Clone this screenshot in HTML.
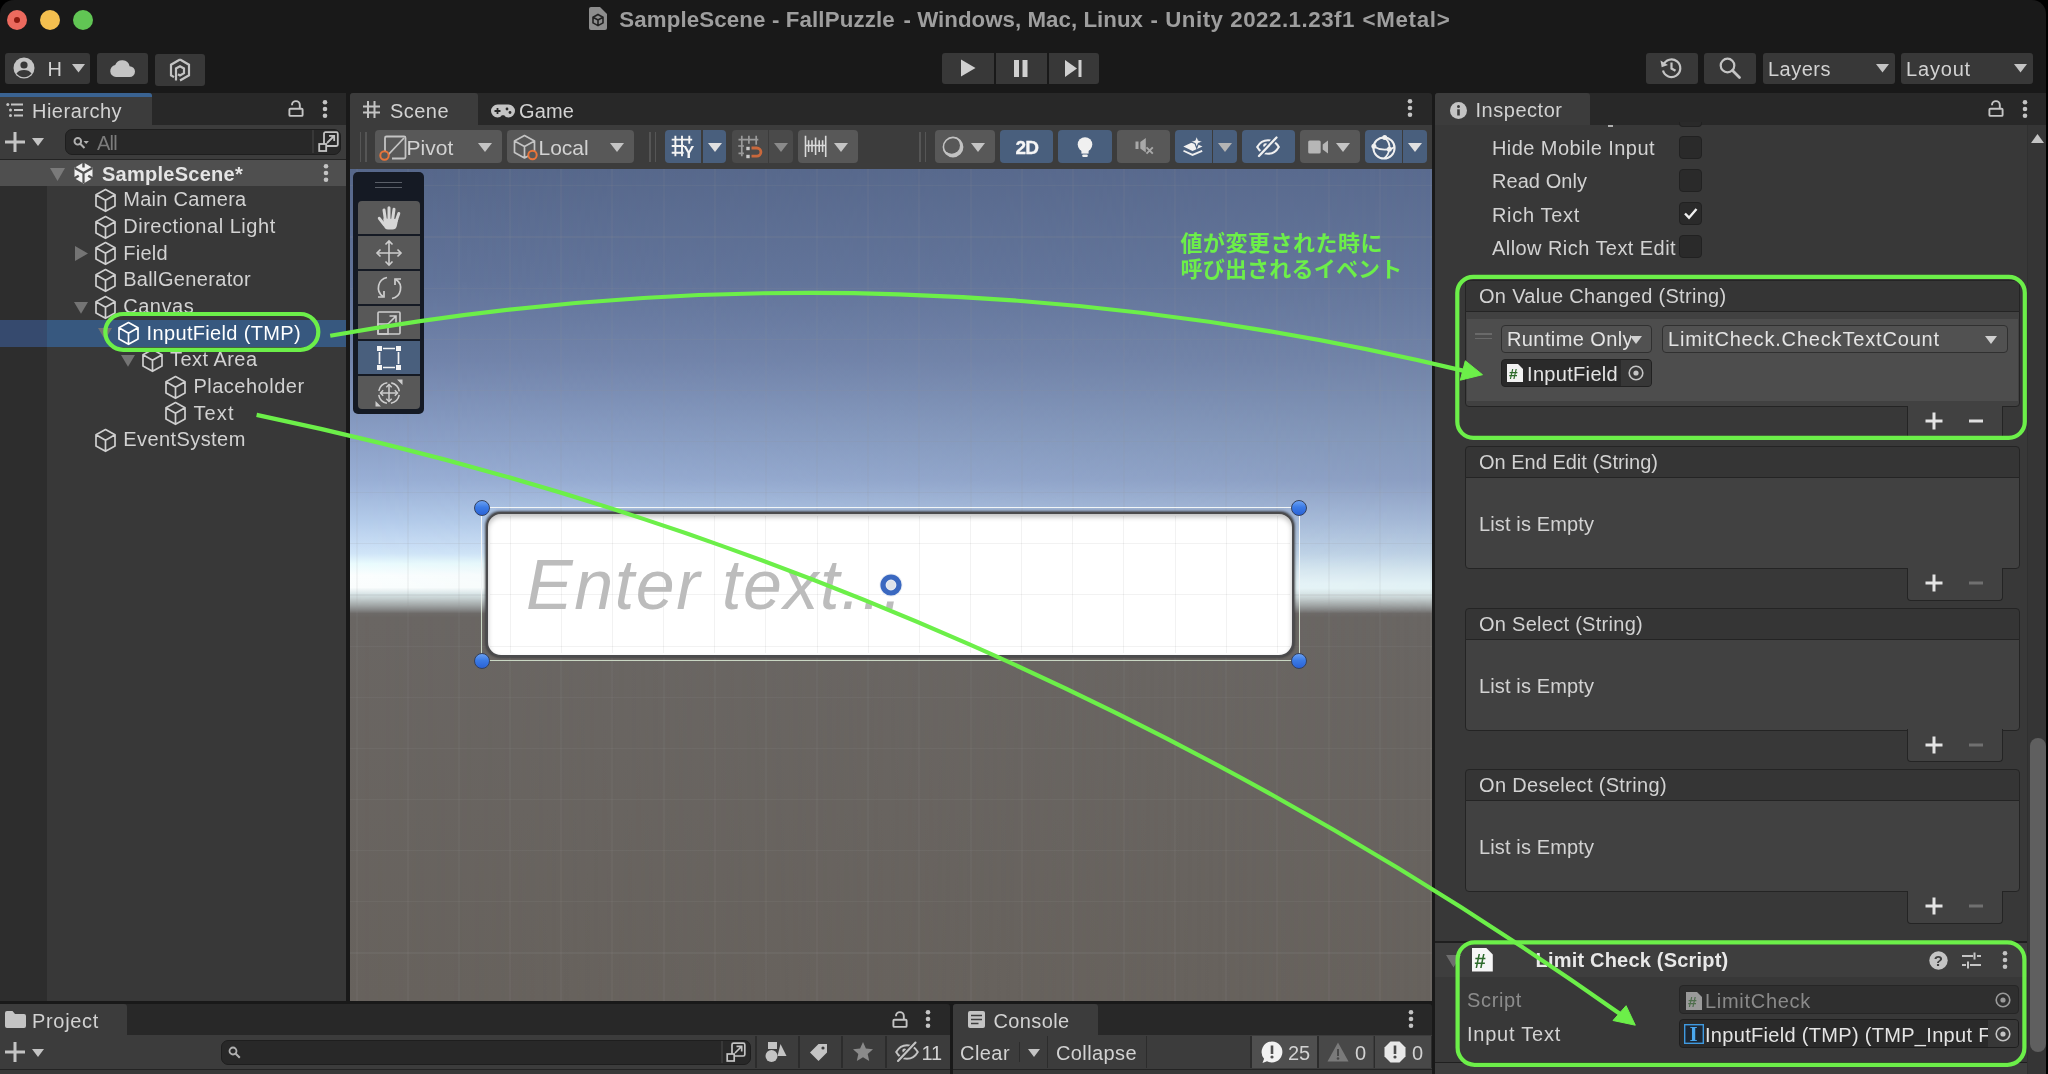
<!DOCTYPE html>
<html lang="ja"><head><meta charset="utf-8"><title>SampleScene - FallPuzzle - Unity</title>
<style>
html,body{margin:0;padding:0;background:#000;}
body{width:2048px;height:1074px;position:relative;overflow:hidden;font-family:"Liberation Sans",sans-serif;}
#root{position:absolute;left:0;top:0;width:2048px;height:1074px;will-change:transform;}
.a{position:absolute;box-sizing:border-box;}
.t{position:absolute;white-space:nowrap;}
svg{overflow:visible;}
</style></head><body><div id="root">
<div class="a " style="left:0px;top:0px;width:2046px;height:1074px;background:#191919;border-radius:14px 14px 0 0;"></div>
<div class="a " style="left:7px;top:10px;width:20px;height:20px;background:#ec6a5e;border-radius:50%;"></div>
<div class="a " style="left:40px;top:10px;width:20px;height:20px;background:#f4bf4f;border-radius:50%;"></div>
<div class="a " style="left:73px;top:10px;width:20px;height:20px;background:#61c554;border-radius:50%;"></div>
<div class="a " style="left:14px;top:17px;width:6px;height:6px;background:#8c1a10;border-radius:50%;"></div>
<svg class="a" style="left:588px;top:6px;" width="20" height="25" viewBox="0 0 20 25"><path d="M1 3a2 2 0 0 1 2-2h9l7 7v14a2 2 0 0 1-2 2H3a2 2 0 0 1-2-2z" fill="#8e8e8e"/><path d="M10 8.5l5 2.8v5.6l-5 2.8-5-2.8v-5.6z M10 14v5.5 M10 14l5-2.7 M10 14L5 11.3" fill="none" stroke="#222" stroke-width="1.6"/></svg>
<span class="t" style="left:619.3px;top:4.5px;font-size:22.3px;color:#9e9e9e;line-height:30px;font-weight:bold;letter-spacing:0.12px;">SampleScene - FallPuzzle</span>
<span class="t" style="left:903.5px;top:4.5px;font-size:22.3px;color:#9e9e9e;line-height:30px;font-weight:bold;letter-spacing:0.03px;">- Windows, Mac, Linux</span>
<span class="t" style="left:1150.5px;top:4.5px;font-size:22.3px;color:#9e9e9e;line-height:30px;font-weight:bold;letter-spacing:0.52px;">- Unity 2022.1.23f1</span>
<span class="t" style="left:1362.5px;top:4.5px;font-size:22.3px;color:#9e9e9e;line-height:30px;font-weight:bold;letter-spacing:0.71px;">&lt;Metal&gt;</span>
<div class="a " style="left:5px;top:52.7px;width:85px;height:31.3px;background:#383838;border-radius:3px;"></div>
<div class="a " style="left:97px;top:52.7px;width:51px;height:31.3px;background:#383838;border-radius:3px;"></div>
<div class="a " style="left:155px;top:53.8px;width:50px;height:32.2px;background:#383838;border-radius:3px;"></div>
<svg class="a" style="left:13px;top:57px;" width="22" height="22" viewBox="0 0 22 22"><circle cx="11" cy="11" r="10.5" fill="#c4c4c4"/><circle cx="11" cy="8" r="3.6" fill="#383838"/><path d="M3.5 16.5c1.5-2.6 4.3-3.6 7.5-3.6s6 1 7.500 3.600c-1.800 2.400-4.500 3.700-7.500 3.700s-5.700-1.300-7.500-3.700z" fill="#383838"/></svg>
<span class="t" style="left:47.5px;top:54.0px;font-size:20px;color:#d2d2d2;line-height:30px;">H</span>
<svg class="a" style="left:72px;top:64px;" width="13" height="9" viewBox="0 0 13 9"><path d="M0 0h13L6.500 8.500z" fill="#c4c4c4"/></svg>
<svg class="a" style="left:110px;top:59px;" width="25" height="18" viewBox="0 0 25 18"><path d="M6 18a6 6 0 0 1-.8-11.900A7.500 7.500 0 0 1 19.600 7.200 5.400 5.400 0 0 1 19.600 18z" fill="#c4c4c4"/></svg>
<svg class="a" style="left:169px;top:58px;" width="22" height="24" viewBox="0 0 22 24"><path d="M11 1.500l9 5.200v10.600l-9 5.200" fill="none" stroke="#c4c4c4" stroke-width="2.200"/><path d="M11 1.500l-9 5.200v10.600l3 1.800" fill="none" stroke="#c4c4c4" stroke-width="2.200"/><path d="M7 22.500v-12l4-2.300 4 2.300v4.600l-4 2.300-2-1.200" fill="none" stroke="#c4c4c4" stroke-width="2.200"/></svg>
<div class="a " style="left:942px;top:52.7px;width:157px;height:31.3px;background:#383838;border-radius:3px;"></div>
<div class="a " style="left:994px;top:52px;width:2px;height:33px;background:#191919;"></div>
<div class="a " style="left:1047px;top:52px;width:2px;height:33px;background:#191919;"></div>
<svg class="a" style="left:960px;top:59px;" width="16" height="18" viewBox="0 0 16 18"><path d="M1 0.500l14.500 8.500L1 17.500z" fill="#d0d0d0"/></svg>
<svg class="a" style="left:1014px;top:60px;" width="14" height="17" viewBox="0 0 14 17"><rect x="0" y="0" width="5" height="17" fill="#d0d0d0"/><rect x="8.500" y="0" width="5" height="17" fill="#d0d0d0"/></svg>
<svg class="a" style="left:1065px;top:60px;" width="17" height="17" viewBox="0 0 17 17"><path d="M0 0l12 8.500L0 17z" fill="#d0d0d0"/><rect x="13.500" y="0" width="3" height="17" fill="#d0d0d0"/></svg>
<div class="a " style="left:1646px;top:52.7px;width:52px;height:31.3px;background:#383838;border-radius:3px;"></div>
<div class="a " style="left:1704px;top:52.7px;width:52px;height:31.3px;background:#383838;border-radius:3px;"></div>
<div class="a " style="left:1763px;top:52.7px;width:132px;height:31.3px;background:#383838;border-radius:3px;"></div>
<div class="a " style="left:1901px;top:52.7px;width:132px;height:31.3px;background:#383838;border-radius:3px;"></div>
<svg class="a" style="left:1660px;top:57px;" width="22" height="22" viewBox="0 0 22 22"><path d="M3.300 8a8.800 8.800 0 1 1-.3 5.500" fill="none" stroke="#c4c4c4" stroke-width="2.200"/><path d="M0.500 3.500l1.200 6.700 6.300-2.200z" fill="#c4c4c4"/><path d="M11.500 5.500v6l4 2.300" fill="none" stroke="#c4c4c4" stroke-width="2.200"/></svg>
<svg class="a" style="left:1719px;top:57px;" width="22" height="22" viewBox="0 0 22 22"><circle cx="8.500" cy="8.500" r="6.800" fill="none" stroke="#c4c4c4" stroke-width="2.200"/><path d="M13.500 13.500l7 7" stroke="#c4c4c4" stroke-width="2.800" stroke-linecap="round"/></svg>
<span class="t" style="left:1768px;top:54.0px;font-size:20px;color:#d2d2d2;line-height:30px;letter-spacing:0.49px;">Layers</span>
<span class="t" style="left:1906px;top:54.0px;font-size:20px;color:#d2d2d2;line-height:30px;letter-spacing:0.82px;">Layout</span>
<svg class="a" style="left:1876px;top:64px;" width="13" height="9" viewBox="0 0 13 9"><path d="M0 0h13L6.500 8.500z" fill="#c4c4c4"/></svg>
<svg class="a" style="left:2014px;top:64px;" width="13" height="9" viewBox="0 0 13 9"><path d="M0 0h13L6.500 8.500z" fill="#c4c4c4"/></svg>
<div class="a " style="left:0px;top:93px;width:346px;height:32px;background:#282828;"></div>
<div class="a " style="left:0px;top:93px;width:152px;height:32px;background:#3c3c3c;border-radius:0 3px 0 0;"></div>
<div class="a " style="left:0px;top:93px;width:152px;height:4px;background:#3a6392;border-radius:0 3px 0 0;"></div>
<svg class="a" style="left:6px;top:102px;" width="18" height="16" viewBox="0 0 18 16"><g fill="#c4c4c4"><circle cx="1.800" cy="2.500" r="1.500"/><circle cx="4.500" cy="8" r="1.500"/><circle cx="4.500" cy="13.500" r="1.500"/><rect x="5" y="1.500" width="12" height="2"/><rect x="8" y="7" width="9" height="2"/><rect x="8" y="12.500" width="9" height="2"/></g></svg>
<span class="t" style="left:32px;top:96.0px;font-size:20px;color:#d2d2d2;line-height:30px;letter-spacing:0.49px;">Hierarchy</span>
<svg class="a" style="left:288px;top:100.0px;" width="16" height="17" viewBox="0 0 16 17"><rect x="1.400" y="8.700" width="13.200" height="7.200" rx="1" fill="none" stroke="#c4c4c4" stroke-width="1.900"/><path d="M4 5.300V5a3.900 3.900 0 0 1 7.800 0V8.700" fill="none" stroke="#c4c4c4" stroke-width="1.900"/></svg>
<svg class="a" style="left:321.5px;top:97.8px;" width="6" height="22" viewBox="0 0 6 22"><circle cx="3" cy="4.2" r="2.3" fill="#c4c4c4"/><circle cx="3" cy="11.0" r="2.3" fill="#c4c4c4"/><circle cx="3" cy="17.8" r="2.3" fill="#c4c4c4"/></svg>
<div class="a " style="left:0px;top:125px;width:346px;height:34px;background:#3c3c3c;"></div>
<div class="a " style="left:0px;top:158.5px;width:346px;height:1.5px;background:#232323;"></div>
<svg class="a" style="left:5px;top:131.5px;" width="20" height="20" viewBox="0 0 20 20"><path d="M10 0v20M0 10h20" stroke="#c4c4c4" stroke-width="3"/></svg>
<svg class="a" style="left:32.0px;top:138.0px;" width="12" height="8" viewBox="0 0 12 8"><path d="M0 0h12L6.0 8z" fill="#c4c4c4"/></svg>
<div class="a " style="left:65px;top:128.5px;width:276px;height:26px;background:#282828;border:1.500px solid #1e1e1e;border-radius:7px;"></div>
<div class="a " style="left:312px;top:130px;width:1.5px;height:23px;background:#383838;"></div>
<svg class="a" style="left:73px;top:136px;" width="18" height="15" viewBox="0 0 18 15"><circle cx="4.800" cy="5.300" r="3.300" fill="none" stroke="#b0b0b0" stroke-width="1.900"/><path d="M7.200 7.700l4.300 4.300" stroke="#b0b0b0" stroke-width="2"/><path d="M10.500 5h5.400l-2.700 3z" fill="#b0b0b0"/></svg>
<span class="t" style="left:97px;top:128.0px;font-size:20px;color:#7c7c7c;line-height:30px;letter-spacing:-0.74px;">All</span>
<svg class="a" style="left:318px;top:131px;" width="21" height="21" viewBox="0 0 21 21"><rect x="6" y="1.200" width="13.800" height="13.800" rx="1.500" fill="none" stroke="#c4c4c4" stroke-width="1.800"/><rect x="1.200" y="13" width="7" height="7" fill="#282828" stroke="#c4c4c4" stroke-width="1.800"/><path d="M9 12l7-7M11 4.800h5.200V10" fill="none" stroke="#c4c4c4" stroke-width="1.800"/></svg>
<div class="a " style="left:0px;top:160px;width:346px;height:841px;background:#383838;"></div>
<div class="a " style="left:0px;top:185px;width:46.5px;height:816px;background:#2d2d2d;"></div>
<div class="a " style="left:0px;top:160px;width:346px;height:25.5px;background:#4f4f4f;"></div>
<svg class="a" style="left:50.0px;top:167.7px;" width="15" height="13" viewBox="0 0 15 13"><path d="M0 0h15L7.5 13z" fill="#7a7a7a"/></svg>
<svg class="a" style="left:73px;top:162px;" width="21" height="22" viewBox="0 0 21 22"><path d="M10.500 0.500l9 5.200v10.500l-9 5.300-9-5.300V5.700z" fill="#f0f0f0"/><path d="M10.500 11v10M10.500 11l8.800-5M10.500 11L1.700 6" stroke="#4f4f4f" stroke-width="2.200"/><path d="M10.500 0v5.500M1 16.500l4.800-2.800M20 16.500l-4.800-2.800" stroke="#4f4f4f" stroke-width="2.400"/></svg>
<span class="t" style="left:102px;top:158.5px;font-size:20px;color:#e4e4e4;line-height:30px;font-weight:bold;letter-spacing:0.26px;">SampleScene*</span>
<svg class="a" style="left:323px;top:162px;" width="6" height="22" viewBox="0 0 6 22"><circle cx="3" cy="4.2" r="2.3" fill="#c4c4c4"/><circle cx="3" cy="11.0" r="2.3" fill="#c4c4c4"/><circle cx="3" cy="17.8" r="2.3" fill="#c4c4c4"/></svg>
<svg class="a" style="left:93.7px;top:188.125px;" width="23" height="25" viewBox="0 0 23 25"><path d="M11.500 1.500l9.500 5.300v11.200l-9.500 5.300-9.500-5.300V6.800z M2 6.800l9.500 5.400 9.500-5.400 M11.500 12.200v11" fill="none" stroke="#cfcfcf" stroke-width="1.700" stroke-linejoin="round"/></svg>
<span class="t" style="left:123.2px;top:184.3px;font-size:20px;color:#d2d2d2;line-height:30px;letter-spacing:0.30px;">Main Camera</span>
<svg class="a" style="left:93.7px;top:214.775px;" width="23" height="25" viewBox="0 0 23 25"><path d="M11.500 1.500l9.500 5.300v11.200l-9.500 5.300-9.500-5.300V6.800z M2 6.800l9.500 5.400 9.500-5.400 M11.500 12.200v11" fill="none" stroke="#cfcfcf" stroke-width="1.700" stroke-linejoin="round"/></svg>
<span class="t" style="left:123.2px;top:211.0px;font-size:20px;color:#d2d2d2;line-height:30px;letter-spacing:0.54px;">Directional Light</span>
<svg class="a" style="left:74.5px;top:245.825px;" width="13" height="15" viewBox="0 0 13 15"><path d="M0 0v15L13 7.5z" fill="#747474"/></svg>
<svg class="a" style="left:93.7px;top:241.425px;" width="23" height="25" viewBox="0 0 23 25"><path d="M11.500 1.500l9.500 5.300v11.200l-9.500 5.300-9.500-5.300V6.800z M2 6.800l9.500 5.400 9.500-5.400 M11.500 12.200v11" fill="none" stroke="#cfcfcf" stroke-width="1.700" stroke-linejoin="round"/></svg>
<span class="t" style="left:123.2px;top:237.6px;font-size:20px;color:#d2d2d2;line-height:30px;letter-spacing:0.29px;">Field</span>
<svg class="a" style="left:93.7px;top:268.075px;" width="23" height="25" viewBox="0 0 23 25"><path d="M11.500 1.500l9.500 5.300v11.200l-9.500 5.300-9.500-5.300V6.800z M2 6.800l9.500 5.400 9.500-5.400 M11.500 12.200v11" fill="none" stroke="#cfcfcf" stroke-width="1.700" stroke-linejoin="round"/></svg>
<span class="t" style="left:123.2px;top:264.3px;font-size:20px;color:#d2d2d2;line-height:30px;letter-spacing:0.34px;">BallGenerator</span>
<svg class="a" style="left:74.2px;top:301.82500000000005px;" width="14" height="11.8" viewBox="0 0 14 11.8"><path d="M0 0h14L7.0 11.8z" fill="#747474"/></svg>
<svg class="a" style="left:93.7px;top:294.725px;" width="23" height="25" viewBox="0 0 23 25"><path d="M11.500 1.500l9.500 5.300v11.200l-9.500 5.300-9.500-5.300V6.800z M2 6.800l9.500 5.400 9.500-5.400 M11.500 12.200v11" fill="none" stroke="#cfcfcf" stroke-width="1.700" stroke-linejoin="round"/></svg>
<span class="t" style="left:123.2px;top:290.9px;font-size:20px;color:#d2d2d2;line-height:30px;letter-spacing:0.53px;">Canvas</span>
<div class="a " style="left:0px;top:320px;width:46.5px;height:26.5px;background:#364a6e;"></div>
<div class="a " style="left:46.5px;top:320px;width:299.5px;height:26.5px;background:#37587f;"></div>
<svg class="a" style="left:97.60000000000001px;top:328.475px;" width="14" height="11.8" viewBox="0 0 14 11.8"><path d="M0 0h14L7.0 11.8z" fill="#747474"/></svg>
<svg class="a" style="left:117.10000000000001px;top:321.375px;" width="23" height="25" viewBox="0 0 23 25"><path d="M11.500 1.500l9.500 5.300v11.200l-9.500 5.300-9.500-5.300V6.800z M2 6.800l9.500 5.400 9.500-5.400 M11.500 12.200v11" fill="none" stroke="#ffffff" stroke-width="1.700" stroke-linejoin="round"/></svg>
<span class="t" style="left:146.6px;top:317.6px;font-size:20px;color:#ffffff;line-height:30px;letter-spacing:0.34px;">InputField (TMP)</span>
<svg class="a" style="left:121.0px;top:355.125px;" width="14" height="11.8" viewBox="0 0 14 11.8"><path d="M0 0h14L7.0 11.8z" fill="#747474"/></svg>
<svg class="a" style="left:140.5px;top:348.025px;" width="23" height="25" viewBox="0 0 23 25"><path d="M11.500 1.500l9.500 5.300v11.200l-9.500 5.300-9.500-5.300V6.800z M2 6.800l9.500 5.400 9.500-5.400 M11.500 12.200v11" fill="none" stroke="#cfcfcf" stroke-width="1.700" stroke-linejoin="round"/></svg>
<span class="t" style="left:170.0px;top:344.2px;font-size:20px;color:#d2d2d2;line-height:30px;letter-spacing:0.46px;">Text Area</span>
<svg class="a" style="left:163.89999999999998px;top:374.67499999999995px;" width="23" height="25" viewBox="0 0 23 25"><path d="M11.500 1.500l9.500 5.300v11.200l-9.500 5.300-9.500-5.300V6.800z M2 6.800l9.500 5.400 9.500-5.400 M11.500 12.200v11" fill="none" stroke="#cfcfcf" stroke-width="1.700" stroke-linejoin="round"/></svg>
<span class="t" style="left:193.39999999999998px;top:370.9px;font-size:20px;color:#d2d2d2;line-height:30px;letter-spacing:0.51px;">Placeholder</span>
<svg class="a" style="left:163.89999999999998px;top:401.325px;" width="23" height="25" viewBox="0 0 23 25"><path d="M11.500 1.500l9.500 5.300v11.200l-9.500 5.300-9.500-5.300V6.800z M2 6.800l9.500 5.400 9.500-5.400 M11.500 12.200v11" fill="none" stroke="#cfcfcf" stroke-width="1.700" stroke-linejoin="round"/></svg>
<span class="t" style="left:193.39999999999998px;top:397.5px;font-size:20px;color:#d2d2d2;line-height:30px;letter-spacing:1.15px;">Text</span>
<svg class="a" style="left:93.7px;top:427.975px;" width="23" height="25" viewBox="0 0 23 25"><path d="M11.500 1.500l9.500 5.300v11.200l-9.500 5.300-9.500-5.300V6.800z M2 6.800l9.500 5.400 9.500-5.400 M11.500 12.200v11" fill="none" stroke="#cfcfcf" stroke-width="1.700" stroke-linejoin="round"/></svg>
<span class="t" style="left:123.2px;top:424.2px;font-size:20px;color:#d2d2d2;line-height:30px;letter-spacing:0.43px;">EventSystem</span>
<div class="a " style="left:346px;top:93px;width:3.5px;height:908px;background:#191919;"></div>
<div class="a " style="left:349.5px;top:93px;width:1082.5px;height:32px;background:#282828;border-radius:3px 3px 0 0;"></div>
<div class="a " style="left:349.5px;top:93px;width:128px;height:32px;background:#3c3c3c;border-radius:3px 3px 0 0;"></div>
<svg class="a" style="left:363px;top:101px;" width="17" height="17" viewBox="0 0 17 17"><path d="M5 0v17M11.500 0v17M0 5.500h17M0 11.500h17" stroke="#c4c4c4" stroke-width="2"/></svg>
<span class="t" style="left:390px;top:96.0px;font-size:20px;color:#d2d2d2;line-height:30px;letter-spacing:0.46px;">Scene</span>
<svg class="a" style="left:491px;top:104px;" width="24" height="14" viewBox="0 0 24 14"><path d="M6.500 0.500h11a6.500 6.500 0 0 1 0 13c-2 0-3.300-1-4.300-2.300h-2.400C9.800 12.500 8.500 13.500 6.500 13.500a6.500 6.500 0 0 1 0-13z" fill="#c4c4c4"/><path d="M6.500 4v6M3.500 7h6" stroke="#282828" stroke-width="1.800"/><circle cx="16" cy="5" r="1.400" fill="#282828"/><circle cx="19" cy="8.500" r="1.400" fill="#282828"/></svg>
<span class="t" style="left:519px;top:96.0px;font-size:20px;color:#d2d2d2;line-height:30px;letter-spacing:0.13px;">Game</span>
<svg class="a" style="left:1407px;top:97px;" width="6" height="22" viewBox="0 0 6 22"><circle cx="3" cy="4.2" r="2.3" fill="#c4c4c4"/><circle cx="3" cy="11.0" r="2.3" fill="#c4c4c4"/><circle cx="3" cy="17.8" r="2.3" fill="#c4c4c4"/></svg>
<div class="a " style="left:349.5px;top:125px;width:1082.5px;height:43.5px;background:#3c3c3c;"></div>
<div class="a " style="left:359.5px;top:132px;width:1.5px;height:30px;background:#555;"></div>
<div class="a " style="left:365.0px;top:132px;width:1.5px;height:30px;background:#555;"></div>
<div class="a " style="left:649px;top:132px;width:1.5px;height:30px;background:#555;"></div>
<div class="a " style="left:654.5px;top:132px;width:1.5px;height:30px;background:#555;"></div>
<div class="a " style="left:919px;top:132px;width:1.5px;height:30px;background:#555;"></div>
<div class="a " style="left:924.5px;top:132px;width:1.5px;height:30px;background:#555;"></div>
<div class="a " style="left:375px;top:130px;width:127px;height:33px;background:#585858;border-radius:4px;"></div>
<div class="a " style="left:507px;top:130px;width:127px;height:33px;background:#585858;border-radius:4px;"></div>
<svg class="a" style="left:377.5px;top:135px;" width="30" height="26" viewBox="0 0 30 26"><path d="M7 18V3a1.500 1.500 0 0 1 1.500-1.500H26a1.500 1.500 0 0 1 1.500 1.500v19a1.500 1.500 0 0 1-1.500 1.500H14" fill="none" stroke="#c4c4c4" stroke-width="1.800"/><path d="M10 20L26 3" stroke="#c4c4c4" stroke-width="1.800"/><circle cx="6.500" cy="20.500" r="4.200" fill="#585858" stroke="#e9743a" stroke-width="2"/></svg>
<span class="t" style="left:406.5px;top:132.5px;font-size:21px;color:#d2d2d2;line-height:30px;letter-spacing:0.06px;">Pivot</span>
<svg class="a" style="left:478.0px;top:142.5px;" width="14" height="9" viewBox="0 0 14 9"><path d="M0 0h14L7.0 9z" fill="#c4c4c4"/></svg>
<svg class="a" style="left:513px;top:134px;" width="32" height="28" viewBox="0 0 32 28"><path d="M11.500 1.500l10 5.500v11.500l-10 5.500-10-5.500V7z M1.500 7l10 5.500 10-5.500 M11.500 12.500V24" fill="none" stroke="#c4c4c4" stroke-width="1.700" stroke-linejoin="round"/><circle cx="19.500" cy="21" r="4.200" fill="#585858" stroke="#e9743a" stroke-width="2"/></svg>
<span class="t" style="left:538.5px;top:132.5px;font-size:21px;color:#d2d2d2;line-height:30px;letter-spacing:-0.04px;">Local</span>
<svg class="a" style="left:610.0px;top:142.5px;" width="14" height="9" viewBox="0 0 14 9"><path d="M0 0h14L7.0 9z" fill="#c4c4c4"/></svg>
<div class="a " style="left:665px;top:130px;width:36px;height:33px;background:#495f7d;border-radius:4px 0 0 4px;"></div>
<div class="a " style="left:702.5px;top:130px;width:23.5px;height:33px;background:#495f7d;border-radius:0 4px 4px 0;"></div>
<svg class="a" style="left:671px;top:135px;" width="24" height="24" viewBox="0 0 24 24"><path d="M4.400 0.700v20.500M11 0.700v20.500M18.300 0.700v8M0.700 4.600h20.500M0.700 11h12.500M0.700 17.800h12" stroke="#f4f4f4" stroke-width="1.900" fill="none"/><text x="12.300" y="23.300" font-family="Liberation Sans, sans-serif" font-size="16.500" font-weight="bold" fill="#f4f4f4">Y</text></svg>
<svg class="a" style="left:707.5px;top:142.5px;" width="14" height="9" viewBox="0 0 14 9"><path d="M0 0h14L7.0 9z" fill="#e0e0e0"/></svg>
<div class="a " style="left:731.5px;top:130px;width:36.0px;height:33px;background:#4a4a4a;border-radius:4px 0 0 4px;"></div>
<div class="a " style="left:769px;top:130px;width:23.5px;height:33px;background:#4a4a4a;border-radius:0 4px 4px 0;"></div>
<svg class="a" style="left:738px;top:135px;" width="30" height="24" viewBox="0 0 30 24"><path d="M3.800 0.700v20.500M10.900 0.700v8M18.200 0.700v9M0.500 4.600h19.800M0.200 11h5.700M0.500 18.300h5.400" stroke="#9a9a9a" stroke-width="1.700" fill="none"/><rect x="8.300" y="11.800" width="3.400" height="3.400" fill="#c8c8c8"/><rect x="8.300" y="19.800" width="3.400" height="3.400" fill="#c8c8c8"/><path d="M13.500 13h5.300a4.100 4.100 0 0 1 0 8.200h-5.300" fill="none" stroke="#c9683c" stroke-width="2.800"/></svg>
<svg class="a" style="left:774.0px;top:142.5px;" width="14" height="9" viewBox="0 0 14 9"><path d="M0 0h14L7.0 9z" fill="#8a8a8a"/></svg>
<div class="a " style="left:798px;top:130px;width:59.5px;height:33px;background:#585858;border-radius:4px;"></div>
<svg class="a" style="left:804px;top:134.5px;" width="24" height="24" viewBox="0 0 24 24"><path d="M1.500 0.800v21.200M21.700 0.800v21.200M1.500 10.500h20.200" stroke="#dadada" stroke-width="1.600"/><path d="M4.600 5.200v11.700M8 5.200v11.700M11.600 2.500v17.500M15.200 5.200v11.700M18.600 5.200v11.700" stroke="#dadada" stroke-width="1.600"/></svg>
<svg class="a" style="left:834.0px;top:142.5px;" width="14" height="9" viewBox="0 0 14 9"><path d="M0 0h14L7.0 9z" fill="#c4c4c4"/></svg>
<div class="a " style="left:935px;top:130px;width:59.5px;height:33px;background:#585858;border-radius:4px;"></div>
<div class="a " style="left:1000px;top:130px;width:53px;height:33px;background:#495f7d;border-radius:4px;"></div>
<div class="a " style="left:1058px;top:130px;width:53.5px;height:33px;background:#495f7d;border-radius:4px;"></div>
<div class="a " style="left:1116.5px;top:130px;width:53.5px;height:33px;background:#585858;border-radius:4px;"></div>
<div class="a " style="left:1175px;top:130px;width:36.5px;height:33px;background:#495f7d;border-radius:4px 0 0 4px;"></div>
<div class="a " style="left:1213px;top:130px;width:23.5px;height:33px;background:#495f7d;border-radius:0 4px 4px 0;"></div>
<div class="a " style="left:1241.5px;top:130px;width:53.0px;height:33px;background:#495f7d;border-radius:4px;"></div>
<div class="a " style="left:1300px;top:130px;width:59.5px;height:33px;background:#585858;border-radius:4px;"></div>
<div class="a " style="left:1365px;top:130px;width:36.5px;height:33px;background:#495f7d;border-radius:4px 0 0 4px;"></div>
<div class="a " style="left:1403px;top:130px;width:24px;height:33px;background:#495f7d;border-radius:0 4px 4px 0;"></div>
<svg class="a" style="left:941px;top:135px;" width="24" height="24" viewBox="0 0 24 24"><circle cx="12" cy="12" r="9.800" fill="#c2c2c2"/><circle cx="10.700" cy="10.500" r="8.300" fill="#585858"/><circle cx="12" cy="12" r="9.600" fill="none" stroke="#c2c2c2" stroke-width="1.600"/></svg>
<svg class="a" style="left:971.0px;top:142.5px;" width="14" height="9" viewBox="0 0 14 9"><path d="M0 0h14L7.0 9z" fill="#c4c4c4"/></svg>
<span class="t" style="left:1015.5px;top:132.5px;font-size:19px;color:#f6f6f6;line-height:30px;font-weight:bold;letter-spacing:-0.90px;-webkit-text-stroke:0.300px #f6f6f6;">2D</span>
<svg class="a" style="left:1075px;top:135px;" width="20" height="25" viewBox="0 0 20 25"><circle cx="10" cy="9.500" r="7.300" fill="#f0f0f0"/><rect x="6.400" y="13" width="7.200" height="5.600" fill="#f0f0f0"/><rect x="7.200" y="19.400" width="5.600" height="2.600" rx="1.200" fill="#f0f0f0"/></svg>
<svg class="a" style="left:1134.5px;top:138px;" width="20" height="18" viewBox="0 0 20 18"><path d="M0.500 3.500h3v7.500h-3z M5.300 4l5.500-4v14.500L5.300 10.500z" fill="#a8a8a8"/><path d="M11.500 9.300l6.300 6.300M17.800 9.300l-6.300 6.300" stroke="#a8a8a8" stroke-width="1.900"/></svg>
<svg class="a" style="left:1183px;top:136.4px;" width="21" height="20" viewBox="0 0 21 20"><path d="M0.300 10.500L9.500 6.300l10 4.200-10 4.400z" fill="#f0f0f0"/><path d="M0.500 14.800l9 4.100 9.700-4.100" fill="none" stroke="#f0f0f0" stroke-width="1.800"/><path d="M13.700 -0.500l1.700 4.600 4.600 1.700-4.600 1.700-1.700 4.600-1.700-4.600-4.600-1.700 4.600-1.700z" fill="#f0f0f0" stroke="#495f7d" stroke-width="1.200"/></svg>
<svg class="a" style="left:1218.0px;top:142.5px;" width="14" height="9" viewBox="0 0 14 9"><path d="M0 0h14L7.0 9z" fill="#b4b4b4"/></svg>
<svg class="a" style="left:1256px;top:136px;" width="24" height="21" viewBox="0 0 24 21"><path d="M1.200 11c2.600-4.600 6.200-6.800 10.800-6.800s8.200 2.200 10.800 6.800c-2.600 4.600-6.200 6.800-10.800 6.800S3.800 15.600 1.200 11z" fill="none" stroke="#f0f0f0" stroke-width="2.100"/><circle cx="9.500" cy="9.500" r="2.300" fill="#f0f0f0"/><path d="M3 20L20.500 1.500" stroke="#495f7d" stroke-width="5"/><path d="M3 20L20.500 1.500" stroke="#f0f0f0" stroke-width="2.300" stroke-linecap="round"/></svg>
<svg class="a" style="left:1308px;top:140px;" width="21" height="14" viewBox="0 0 21 14"><rect x="0.200" y="0.500" width="12.500" height="13" rx="1.500" fill="#b6b6b6"/><path d="M14.700 4.500l5.300-4v13l-5.300-4z" fill="#b6b6b6"/></svg>
<svg class="a" style="left:1336.0px;top:142.5px;" width="14" height="9" viewBox="0 0 14 9"><path d="M0 0h14L7.0 9z" fill="#c4c4c4"/></svg>
<svg class="a" style="left:1370.5px;top:133.5px;" width="26" height="26" viewBox="0 0 26 26"><circle cx="13" cy="14" r="10.600" fill="none" stroke="#f0f0f0" stroke-width="2"/><path d="M13.500 3.500Q19.500 8.500 18.300 15.200M2.800 12.500Q10 17 18.300 15.200M18.300 15.200Q17.500 21.500 13 24.500M18.300 15.200Q21.500 14.600 23.500 13" fill="none" stroke="#f0f0f0" stroke-width="1.800"/><circle cx="13.700" cy="3.400" r="2.500" fill="#f0f0f0"/><circle cx="2.900" cy="12.300" r="2.500" fill="#f0f0f0"/><circle cx="18.300" cy="15.200" r="2.500" fill="#f0f0f0"/></svg>
<svg class="a" style="left:1408.0px;top:142.5px;" width="14" height="9" viewBox="0 0 14 9"><path d="M0 0h14L7.0 9z" fill="#e0e0e0"/></svg>
<div class="a" style="left:349.5px;top:168.5px;width:1082.5px;height:832.0px;background:linear-gradient(180deg,#5a6b8f 0.0px,#64769b 111.5px,#7284a8 191.5px,#8498ba 271.5px,#8c9fc3 311.5px,#a4b8d6 351.5px,#bcd0e4 384.5px,#d3e4ee 401.5px,#e1f1f5 414.5px,#e2f2f5 419.5px,#d5e2e4 425.5px,#c5cfd0 429.5px,#a0a5a5 436.5px,#858686 441.0px,#6d6a68 444.5px,#6a6663 448.5px,#67625d 832.0px);overflow:hidden;">
<div class="a" style="left:0;top:0;width:100%;height:100%;background:linear-gradient(180deg,#56678a 0.0px,#617399 111.5px,#7284ab 191.5px,#8ba0c7 271.5px,#99afd5 311.5px,#b3cbea 351.5px,#c7dcf4 374.5px,#d0e5f8 384.5px,#e9fbfd 394.5px,#fbfefe 406.5px,#fafdfd 418.5px,#d5e2e4 425.5px,#c5cfd0 429.5px,#a0a5a5 436.5px,#858686 441.0px,#6d6a68 444.5px,#6a6663 448.5px,#67625d 832.0px);-webkit-mask-image:linear-gradient(90deg,#000 0%,rgba(0,0,0,.0) 100%);mask-image:linear-gradient(90deg,#000 0%,rgba(0,0,0,0) 100%);"></div>
<div class="a" style="left:6.2px;top:0;width:2px;height:100%;background:rgba(150,150,150,.085)"></div><div class="a" style="left:57.4px;top:0;width:2px;height:100%;background:rgba(150,150,150,.085)"></div><div class="a" style="left:108.5px;top:0;width:2px;height:100%;background:rgba(150,150,150,.085)"></div><div class="a" style="left:159.6px;top:0;width:2px;height:100%;background:rgba(150,150,150,.085)"></div><div class="a" style="left:210.8px;top:0;width:2px;height:100%;background:rgba(150,150,150,.085)"></div><div class="a" style="left:261.9px;top:0;width:2px;height:100%;background:rgba(150,150,150,.085)"></div><div class="a" style="left:313.1px;top:0;width:2px;height:100%;background:rgba(150,150,150,.085)"></div><div class="a" style="left:364.2px;top:0;width:2px;height:100%;background:rgba(150,150,150,.085)"></div><div class="a" style="left:415.4px;top:0;width:2px;height:100%;background:rgba(150,150,150,.085)"></div><div class="a" style="left:466.5px;top:0;width:2px;height:100%;background:rgba(150,150,150,.085)"></div><div class="a" style="left:517.7px;top:0;width:2px;height:100%;background:rgba(150,150,150,.085)"></div><div class="a" style="left:568.8px;top:0;width:2px;height:100%;background:rgba(150,150,150,.085)"></div><div class="a" style="left:620.0px;top:0;width:2px;height:100%;background:rgba(150,150,150,.085)"></div><div class="a" style="left:671.1px;top:0;width:2px;height:100%;background:rgba(150,150,150,.085)"></div><div class="a" style="left:722.3px;top:0;width:2px;height:100%;background:rgba(150,150,150,.085)"></div><div class="a" style="left:773.4px;top:0;width:2px;height:100%;background:rgba(150,150,150,.085)"></div><div class="a" style="left:824.6px;top:0;width:2px;height:100%;background:rgba(150,150,150,.085)"></div><div class="a" style="left:875.8px;top:0;width:2px;height:100%;background:rgba(150,150,150,.085)"></div><div class="a" style="left:926.9px;top:0;width:2px;height:100%;background:rgba(150,150,150,.085)"></div><div class="a" style="left:978.1px;top:0;width:2px;height:100%;background:rgba(150,150,150,.085)"></div><div class="a" style="left:1029.2px;top:0;width:2px;height:100%;background:rgba(150,150,150,.085)"></div><div class="a" style="left:1080.4px;top:0;width:2px;height:100%;background:rgba(150,150,150,.085)"></div><div class="a" style="left:0;top:16.7px;height:1.3px;width:100%;background:rgba(150,150,150,.13)"></div><div class="a" style="left:0;top:67.8px;height:1.3px;width:100%;background:rgba(150,150,150,.13)"></div><div class="a" style="left:0;top:119.0px;height:1.3px;width:100%;background:rgba(150,150,150,.13)"></div><div class="a" style="left:0;top:170.1px;height:1.3px;width:100%;background:rgba(150,150,150,.13)"></div><div class="a" style="left:0;top:221.3px;height:1.3px;width:100%;background:rgba(150,150,150,.13)"></div><div class="a" style="left:0;top:272.4px;height:1.3px;width:100%;background:rgba(150,150,150,.13)"></div><div class="a" style="left:0;top:323.6px;height:1.3px;width:100%;background:rgba(150,150,150,.13)"></div><div class="a" style="left:0;top:374.7px;height:1.3px;width:100%;background:rgba(150,150,150,.13)"></div><div class="a" style="left:0;top:425.9px;height:1.3px;width:100%;background:rgba(150,150,150,.13)"></div><div class="a" style="left:0;top:477.0px;height:1.3px;width:100%;background:rgba(150,150,150,.13)"></div><div class="a" style="left:0;top:528.1px;height:1.3px;width:100%;background:rgba(150,150,150,.13)"></div><div class="a" style="left:0;top:579.3px;height:1.3px;width:100%;background:rgba(150,150,150,.13)"></div><div class="a" style="left:0;top:630.4px;height:1.3px;width:100%;background:rgba(150,150,150,.13)"></div><div class="a" style="left:0;top:681.6px;height:1.3px;width:100%;background:rgba(150,150,150,.13)"></div><div class="a" style="left:0;top:732.7px;height:1.3px;width:100%;background:rgba(150,150,150,.13)"></div><div class="a" style="left:0;top:783.9px;height:1.3px;width:100%;background:rgba(150,150,150,.13)"></div>
</div>
<div class="a " style="left:486.3px;top:512.1px;width:807.4px;height:145px;background:#ffffff;border-radius:15px;border:2.400px solid #4b4b4d;box-shadow:inset 0 3px 5px rgba(0,0,0,.25), 0 0 2.500px 0.300px rgba(60,60,62,.85);"></div>
<div class="a " style="left:509.65px;top:516px;width:1px;height:137px;background:rgba(0,0,0,.05);"></div>
<div class="a " style="left:560.8px;top:516px;width:1px;height:137px;background:rgba(0,0,0,.05);"></div>
<div class="a " style="left:611.9499999999999px;top:516px;width:1px;height:137px;background:rgba(0,0,0,.05);"></div>
<div class="a " style="left:663.0999999999999px;top:516px;width:1px;height:137px;background:rgba(0,0,0,.05);"></div>
<div class="a " style="left:714.2499999999999px;top:516px;width:1px;height:137px;background:rgba(0,0,0,.05);"></div>
<div class="a " style="left:765.3999999999999px;top:516px;width:1px;height:137px;background:rgba(0,0,0,.05);"></div>
<div class="a " style="left:816.5499999999998px;top:516px;width:1px;height:137px;background:rgba(0,0,0,.05);"></div>
<div class="a " style="left:867.6999999999998px;top:516px;width:1px;height:137px;background:rgba(0,0,0,.05);"></div>
<div class="a " style="left:918.8499999999998px;top:516px;width:1px;height:137px;background:rgba(0,0,0,.05);"></div>
<div class="a " style="left:969.9999999999998px;top:516px;width:1px;height:137px;background:rgba(0,0,0,.05);"></div>
<div class="a " style="left:1021.1499999999997px;top:516px;width:1px;height:137px;background:rgba(0,0,0,.05);"></div>
<div class="a " style="left:1072.2999999999997px;top:516px;width:1px;height:137px;background:rgba(0,0,0,.05);"></div>
<div class="a " style="left:1123.4499999999998px;top:516px;width:1px;height:137px;background:rgba(0,0,0,.05);"></div>
<div class="a " style="left:1174.6px;top:516px;width:1px;height:137px;background:rgba(0,0,0,.05);"></div>
<div class="a " style="left:1225.75px;top:516px;width:1px;height:137px;background:rgba(0,0,0,.05);"></div>
<div class="a " style="left:1276.9px;top:516px;width:1px;height:137px;background:rgba(0,0,0,.05);"></div>
<div class="a " style="left:490px;top:543.2px;width:799.5px;height:1px;background:rgba(0,0,0,.05);"></div>
<div class="a " style="left:490px;top:594.35px;width:799.5px;height:1px;background:rgba(0,0,0,.05);"></div>
<div class="a " style="left:490px;top:645.5px;width:799.5px;height:1px;background:rgba(0,0,0,.05);"></div>
<span class="t" style="left:526px;top:569.5px;font-size:70px;color:#bcbcbc;line-height:30px;font-style:italic;letter-spacing:1.54px;line-height:80px;margin-top:-25px;">Enter text...</span>
<div class="a " style="left:481px;top:507.2px;width:818.5px;height:1.3px;background:#f2f5f6;"></div>
<div class="a " style="left:481px;top:660.2px;width:818.5px;height:1.3px;background:#c9d7c3;"></div>
<div class="a " style="left:481px;top:507.2px;width:1.3px;height:154px;background:linear-gradient(180deg,#f2f5f6 0,#f2f5f6 85px,#c9d7c3 108px,#c9d7c3 100%);"></div>
<div class="a " style="left:1298.8px;top:507.2px;width:1.3px;height:154px;background:linear-gradient(180deg,#f2f5f6 0,#f2f5f6 85px,#c9d7c3 108px,#c9d7c3 100%);"></div>
<div class="a " style="left:473.5px;top:499.7px;width:16px;height:16px;background:linear-gradient(180deg,#6aa0f2 0,#3b7be6 45%,#2a62d6 100%);border-radius:50%;border:1.200px solid #33415f;"></div>
<div class="a " style="left:1291px;top:499.7px;width:16px;height:16px;background:linear-gradient(180deg,#6aa0f2 0,#3b7be6 45%,#2a62d6 100%);border-radius:50%;border:1.200px solid #33415f;"></div>
<div class="a " style="left:473.5px;top:652.7px;width:16px;height:16px;background:linear-gradient(180deg,#6aa0f2 0,#3b7be6 45%,#2a62d6 100%);border-radius:50%;border:1.200px solid #33415f;"></div>
<div class="a " style="left:1291px;top:652.7px;width:16px;height:16px;background:linear-gradient(180deg,#6aa0f2 0,#3b7be6 45%,#2a62d6 100%);border-radius:50%;border:1.200px solid #33415f;"></div>
<svg class="a" style="left:875.5px;top:570px;" width="30" height="30" viewBox="0 0 30 30"><path d="M6 3l18 24M25 5L5 25" stroke="rgba(255,255,255,.5)" stroke-width="1"/><circle cx="15" cy="15" r="8" fill="#dfe3ea" stroke="#e9edf4" stroke-width="7"/><circle cx="15" cy="15" r="8" fill="none" stroke="#3a68c0" stroke-width="5.200"/></svg>
<div class="a " style="left:353px;top:172px;width:71px;height:241.5px;background:#151a24;border-radius:5px;"></div>
<div class="a " style="left:375px;top:181.5px;width:27px;height:1.5px;background:#5a5f68;"></div>
<div class="a " style="left:375px;top:186.5px;width:27px;height:1.5px;background:#5a5f68;"></div>
<div class="a " style="left:357.5px;top:201.3px;width:62px;height:33px;background:#585858;border-radius:4px 4px 0 0;"></div>
<div class="a " style="left:357.5px;top:236px;width:62px;height:33px;background:#585858;border-radius:0;"></div>
<div class="a " style="left:357.5px;top:271px;width:62px;height:33px;background:#585858;border-radius:0;"></div>
<div class="a " style="left:357.5px;top:306px;width:62px;height:33px;background:#585858;border-radius:0;"></div>
<div class="a " style="left:357.5px;top:341.2px;width:62px;height:33px;background:#495f7d;border-radius:0;"></div>
<div class="a " style="left:357.5px;top:376px;width:62px;height:33px;background:#585858;border-radius:0 0 4px 4px;"></div>
<svg class="a" style="left:376.5px;top:204.5px;" width="24" height="25" viewBox="0 0 24 25"><path d="M6.300 13.500L6.800 20.500Q7.500 24.500 11 24.500h4.500Q19 24.500 19.800 21L21.300 14z" fill="#d6d6d6"/><path d="M8.300 14L7 5M12 13.500V2.800M15.700 14L17 4.300M19.300 15.500L21.800 8.500M7.500 20L2.300 13.300" stroke="#d6d6d6" stroke-width="3" stroke-linecap="round" fill="none"/></svg>
<svg class="a" style="left:376px;top:240px;" width="26" height="26" viewBox="0 0 26 26"><path d="M13 1v24M1 13h24" stroke="#cdcdcd" stroke-width="1.600"/><path d="M9.500 4.500L13 1l3.500 3.500M9.500 21.500L13 25l3.500-3.500M4.500 9.500L1 13l3.500 3.500M21.500 9.500L25 13l-3.500 3.500" fill="none" stroke="#cdcdcd" stroke-width="1.600"/></svg>
<svg class="a" style="left:377px;top:275px;" width="25" height="26" viewBox="0 0 25 26"><path d="M10 2.500A10.500 10.500 0 0 0 6 21.500M15 23.500A10.500 10.500 0 0 0 19 4.500" fill="none" stroke="#cdcdcd" stroke-width="1.700"/><path d="M1 22h6v-6M24 4h-6v6" fill="none" stroke="#cdcdcd" stroke-width="1.700"/></svg>
<svg class="a" style="left:377px;top:311px;" width="24" height="24" viewBox="0 0 24 24"><rect x="1" y="1" width="22" height="22" rx="1" fill="none" stroke="#cdcdcd" stroke-width="1.600"/><rect x="1" y="13" width="10" height="10" fill="none" stroke="#cdcdcd" stroke-width="1.600"/><path d="M9 15L19 5M12.500 5H19v6.500" fill="none" stroke="#cdcdcd" stroke-width="1.600"/></svg>
<svg class="a" style="left:377px;top:346px;" width="24" height="24" viewBox="0 0 24 24"><path d="M6 2.500h12M6 21.500h12M2.500 6v12M21.500 6v12" stroke="#f4f4f4" stroke-width="1.700"/><rect x="0" y="0" width="5" height="5" fill="#f4f4f4"/><rect x="19" y="0" width="5" height="5" fill="#f4f4f4"/><rect x="0" y="19" width="5" height="5" fill="#f4f4f4"/><rect x="19" y="19" width="5" height="5" fill="#f4f4f4"/></svg>
<svg class="a" style="left:375px;top:379px;" width="28" height="28" viewBox="0 0 28 28"><circle cx="14" cy="14" r="10.400" fill="none" stroke="#cdcdcd" stroke-width="1.600" stroke-dasharray="12.300 4.040" stroke-dashoffset="-2"/><path d="M14 5.500v17M5.500 14h17" stroke="#cdcdcd" stroke-width="1.500"/><path d="M11.300 8.200L14 5.500l2.700 2.700M11.300 19.800L14 22.500l2.700-2.700M8.200 11.300L5.500 14l2.700 2.700M19.800 11.300L22.500 14l-2.700 2.700" fill="none" stroke="#cdcdcd" stroke-width="1.500"/><path d="M22 0.500h5.500v5.500zM0.500 22v5.500h5.500z" fill="#cdcdcd"/></svg>
<div class="a " style="left:1432px;top:93px;width:3px;height:981px;background:#191919;"></div>
<div class="a " style="left:1435px;top:93px;width:611px;height:32px;background:#282828;border-radius:3px 0 0 0;"></div>
<div class="a " style="left:1435px;top:93px;width:155px;height:32px;background:#3c3c3c;border-radius:3px 3px 0 0;"></div>
<svg class="a" style="left:1450px;top:101.5px;" width="17" height="17" viewBox="0 0 17 17"><circle cx="8.500" cy="8.500" r="8.500" fill="#c4c4c4"/><rect x="7.200" y="7.300" width="2.600" height="6.200" fill="#3c3c3c"/><circle cx="8.500" cy="4.600" r="1.500" fill="#3c3c3c"/></svg>
<span class="t" style="left:1475.5px;top:95.0px;font-size:20px;color:#d2d2d2;line-height:30px;letter-spacing:0.53px;">Inspector</span>
<svg class="a" style="left:1988px;top:100.3px;" width="16" height="17" viewBox="0 0 16 17"><rect x="1.400" y="8.700" width="13.200" height="7.200" rx="1" fill="none" stroke="#c4c4c4" stroke-width="1.900"/><path d="M4 5.300V5a3.900 3.900 0 0 1 7.800 0V8.700" fill="none" stroke="#c4c4c4" stroke-width="1.900"/></svg>
<svg class="a" style="left:2021.5px;top:98px;" width="6" height="22" viewBox="0 0 6 22"><circle cx="3" cy="4.2" r="2.3" fill="#c4c4c4"/><circle cx="3" cy="11.0" r="2.3" fill="#c4c4c4"/><circle cx="3" cy="17.8" r="2.3" fill="#c4c4c4"/></svg>
<div class="a " style="left:1435px;top:125px;width:611px;height:949px;background:#383838;"></div>
<div class="a " style="left:2027px;top:125px;width:19px;height:949px;background:#353535;border-left:1px solid #303030;"></div>
<svg class="a" style="left:2030.5px;top:133.5px;" width="13" height="9" viewBox="0 0 13 9"><path d="M0 9h13L6.500 0z" fill="#c4c4c4"/></svg>
<div class="a " style="left:2030px;top:738px;width:16px;height:314px;background:#5f5f5f;border-radius:8px;"></div>
<div class="a " style="left:1679px;top:122px;width:23px;height:5px;background:#2a2a2a;border:1.200px solid #212121;border-radius:0 0 4px 4px;border-top:none;"></div>
<div class="a " style="left:1608px;top:125px;width:5px;height:1.5px;background:#b0b0b0;"></div>
<span class="t" style="left:1492px;top:133.0px;font-size:20px;color:#d2d2d2;line-height:30px;letter-spacing:0.43px;">Hide Mobile Input</span>
<div class="a " style="left:1679px;top:135.5px;width:23px;height:23px;background:#2a2a2a;border:1.200px solid #212121;border-radius:4px;"></div>
<span class="t" style="left:1492px;top:166.3px;font-size:20px;color:#d2d2d2;line-height:30px;letter-spacing:0.06px;">Read Only</span>
<div class="a " style="left:1679px;top:168.8px;width:23px;height:23px;background:#2a2a2a;border:1.200px solid #212121;border-radius:4px;"></div>
<span class="t" style="left:1492px;top:199.6px;font-size:20px;color:#d2d2d2;line-height:30px;letter-spacing:0.68px;">Rich Text</span>
<div class="a " style="left:1679px;top:202.1px;width:23px;height:23px;background:#2a2a2a;border:1.200px solid #212121;border-radius:4px;"></div>
<svg class="a" style="left:1682px;top:205.1px;" width="17" height="17" viewBox="0 0 17 17"><path d="M3 8.500l4 4.200L14.500 4" fill="none" stroke="#f0f0f0" stroke-width="2.400"/></svg>
<span class="t" style="left:1492px;top:232.9px;font-size:20px;color:#d2d2d2;line-height:30px;letter-spacing:0.44px;">Allow Rich Text Edit</span>
<div class="a " style="left:1679px;top:235.39999999999998px;width:23px;height:23px;background:#2a2a2a;border:1.200px solid #212121;border-radius:4px;"></div>
<div class="a " style="left:1465px;top:280px;width:554.5px;height:32px;background:#353535;border:1.500px solid #242424;border-radius:4px 4px 0 0;"></div>
<span class="t" style="left:1479px;top:281.0px;font-size:20px;color:#d2d2d2;line-height:30px;letter-spacing:0.31px;">On Value Changed (String)</span>
<div class="a " style="left:1465px;top:311px;width:554.5px;height:96px;background:#414141;border:1.500px solid #242424;border-radius:0 0 4px 4px;"></div>
<div class="a " style="left:1906.5px;top:405.5px;width:96px;height:33px;background:#414141;border:1.500px solid #242424;border-top:none;border-radius:0 0 4px 4px;"></div>
<svg class="a" style="left:1924px;top:411.0px;" width="20" height="20" viewBox="0 0 20 20"><path d="M10 1.500v17M1.500 10h17" stroke="#e4e4e4" stroke-width="3"/></svg>
<svg class="a" style="left:1968px;top:411.0px;" width="16" height="20" viewBox="0 0 16 20"><path d="M1 10h14" stroke="#e0e0e0" stroke-width="3"/></svg>
<div class="a " style="left:1466.5px;top:318.5px;width:551.5px;height:82.5px;background:#4d4d4d;"></div>
<div class="a " style="left:1475px;top:333px;width:17px;height:1.5px;background:#6a6a6a;"></div>
<div class="a " style="left:1475px;top:337.5px;width:17px;height:1.5px;background:#6a6a6a;"></div>
<div class="a " style="left:1500.5px;top:325px;width:151.5px;height:28px;background:#515151;border:1.200px solid #303030;border-radius:4px;"></div>
<span class="t" style="left:1507px;top:324.0px;font-size:20px;color:#e4e4e4;line-height:30px;width:124px;overflow:hidden;letter-spacing:0.40px;">Runtime Only</span>
<svg class="a" style="left:1630.0px;top:335.5px;" width="12" height="8" viewBox="0 0 12 8"><path d="M0 0h12L6.0 8z" fill="#d0d0d0"/></svg>
<div class="a " style="left:1661.5px;top:325px;width:346.5px;height:28px;background:#515151;border:1.200px solid #303030;border-radius:4px;"></div>
<span class="t" style="left:1668px;top:324.0px;font-size:20px;color:#e4e4e4;line-height:30px;letter-spacing:0.83px;">LimitCheck.CheckTextCount</span>
<svg class="a" style="left:1985.0px;top:335.5px;" width="12" height="8" viewBox="0 0 12 8"><path d="M0 0h12L6.0 8z" fill="#d0d0d0"/></svg>
<div class="a " style="left:1500.5px;top:358.5px;width:151.5px;height:28.5px;background:#2a2a2a;border:1.200px solid #212121;border-radius:4px;"></div>
<div class="a " style="left:1621px;top:359.5px;width:30px;height:26.5px;background:#373737;border-radius:0 3px 3px 0;"></div>
<svg class="a" style="left:1507px;top:364px;" width="16.0" height="18.0" viewBox="0 0 16 18"><path d="M0 0h11l5 5v13H0z" fill="#f2f2f2"/><text x="1.900" y="15.200" font-family="Liberation Sans, sans-serif" font-size="15.500" font-weight="bold" fill="#2e6b2c">#</text></svg>
<span class="t" style="left:1527px;top:358.5px;font-size:20px;color:#e4e4e4;line-height:30px;letter-spacing:0.32px;">InputField</span>
<svg class="a" style="left:1628px;top:365px;" width="16" height="16" viewBox="0 0 16 16"><circle cx="8" cy="8" r="6.800" fill="none" stroke="#c4c4c4" stroke-width="1.600"/><circle cx="8" cy="8" r="2.600" fill="#c4c4c4"/></svg>
<div class="a " style="left:1465px;top:446px;width:554.5px;height:32px;background:#353535;border:1.500px solid #242424;border-radius:4px 4px 0 0;"></div>
<span class="t" style="left:1479px;top:447.0px;font-size:20px;color:#d2d2d2;line-height:30px;">On End Edit (String)</span>
<div class="a " style="left:1465px;top:477px;width:554.5px;height:92px;background:#414141;border:1.500px solid #242424;border-radius:0 0 4px 4px;"></div>
<div class="a " style="left:1906.5px;top:567.5px;width:96px;height:33px;background:#414141;border:1.500px solid #242424;border-top:none;border-radius:0 0 4px 4px;"></div>
<svg class="a" style="left:1924px;top:573.0px;" width="20" height="20" viewBox="0 0 20 20"><path d="M10 1.500v17M1.500 10h17" stroke="#e4e4e4" stroke-width="3"/></svg>
<svg class="a" style="left:1968px;top:573.0px;" width="16" height="20" viewBox="0 0 16 20"><path d="M1 10h14" stroke="#707070" stroke-width="3"/></svg>
<span class="t" style="left:1479px;top:509.0px;font-size:20px;color:#d2d2d2;line-height:30px;letter-spacing:0.13px;">List is Empty</span>
<div class="a " style="left:1465px;top:607.7px;width:554.5px;height:32px;background:#353535;border:1.500px solid #242424;border-radius:4px 4px 0 0;"></div>
<span class="t" style="left:1479px;top:608.7px;font-size:20px;color:#d2d2d2;line-height:30px;letter-spacing:0.28px;">On Select (String)</span>
<div class="a " style="left:1465px;top:638.7px;width:554.5px;height:92px;background:#414141;border:1.500px solid #242424;border-radius:0 0 4px 4px;"></div>
<div class="a " style="left:1906.5px;top:729.2px;width:96px;height:33px;background:#414141;border:1.500px solid #242424;border-top:none;border-radius:0 0 4px 4px;"></div>
<svg class="a" style="left:1924px;top:734.7px;" width="20" height="20" viewBox="0 0 20 20"><path d="M10 1.500v17M1.500 10h17" stroke="#e4e4e4" stroke-width="3"/></svg>
<svg class="a" style="left:1968px;top:734.7px;" width="16" height="20" viewBox="0 0 16 20"><path d="M1 10h14" stroke="#707070" stroke-width="3"/></svg>
<span class="t" style="left:1479px;top:670.7px;font-size:20px;color:#d2d2d2;line-height:30px;letter-spacing:0.13px;">List is Empty</span>
<div class="a " style="left:1465px;top:769.4px;width:554.5px;height:32px;background:#353535;border:1.500px solid #242424;border-radius:4px 4px 0 0;"></div>
<span class="t" style="left:1479px;top:770.4px;font-size:20px;color:#d2d2d2;line-height:30px;letter-spacing:0.34px;">On Deselect (String)</span>
<div class="a " style="left:1465px;top:800.4px;width:554.5px;height:92px;background:#414141;border:1.500px solid #242424;border-radius:0 0 4px 4px;"></div>
<div class="a " style="left:1906.5px;top:890.9px;width:96px;height:33px;background:#414141;border:1.500px solid #242424;border-top:none;border-radius:0 0 4px 4px;"></div>
<svg class="a" style="left:1924px;top:896.4px;" width="20" height="20" viewBox="0 0 20 20"><path d="M10 1.500v17M1.500 10h17" stroke="#e4e4e4" stroke-width="3"/></svg>
<svg class="a" style="left:1968px;top:896.4px;" width="16" height="20" viewBox="0 0 16 20"><path d="M1 10h14" stroke="#707070" stroke-width="3"/></svg>
<span class="t" style="left:1479px;top:832.4px;font-size:20px;color:#d2d2d2;line-height:30px;letter-spacing:0.13px;">List is Empty</span>
<div class="a " style="left:1435px;top:941px;width:592px;height:1.5px;background:#1f1f1f;"></div>
<div class="a " style="left:1435px;top:942.5px;width:592px;height:34px;background:#3e3e3e;"></div>
<svg class="a" style="left:1445.5px;top:954.75px;" width="15" height="12.5" viewBox="0 0 15 12.5"><path d="M0 0h15L7.5 12.5z" fill="#6e6e6e"/></svg>
<svg class="a" style="left:1471.5px;top:948px;" width="20.8" height="23.400000000000002" viewBox="0 0 16 18"><path d="M0 0h11l5 5v13H0z" fill="#f6f6f6"/><text x="1.900" y="15.200" font-family="Liberation Sans, sans-serif" font-size="15.500" font-weight="bold" fill="#2e6b2c">#</text></svg>
<span class="t" style="left:1535.5px;top:945.0px;font-size:20px;color:#e8e8e8;line-height:30px;font-weight:bold;letter-spacing:0.20px;">Limit Check (Script)</span>
<svg class="a" style="left:1928.5px;top:950.5px;" width="19" height="19" viewBox="0 0 19 19"><circle cx="9.500" cy="9.500" r="9.200" fill="#c4c4c4"/><text x="4.700" y="15" font-family="Liberation Sans, sans-serif" font-size="15" font-weight="bold" fill="#3e3e3e">?</text></svg>
<svg class="a" style="left:1962px;top:951px;" width="19" height="19" viewBox="0 0 19 19"><path d="M0 5h11M15 5h4M0 14h4M8 14h11M12.500 1.500v7M6 10.500v7" stroke="#c4c4c4" stroke-width="2"/></svg>
<svg class="a" style="left:2002px;top:949px;" width="6" height="22" viewBox="0 0 6 22"><circle cx="3" cy="4.2" r="2.3" fill="#c4c4c4"/><circle cx="3" cy="11.0" r="2.3" fill="#c4c4c4"/><circle cx="3" cy="17.8" r="2.3" fill="#c4c4c4"/></svg>
<span class="t" style="left:1467px;top:985.0px;font-size:20px;color:#8c8c8c;line-height:30px;letter-spacing:0.65px;">Script</span>
<div class="a " style="left:1679px;top:985px;width:339.5px;height:29px;background:#2f2f2f;border:1.200px solid #262626;border-radius:4px;"></div>
<svg class="a" style="left:1686px;top:991.5px;" width="16.0" height="18.0" viewBox="0 0 16 18"><path d="M0 0h11l5 5v13H0z" fill="#9a9a9a"/><text x="1.900" y="15.200" font-family="Liberation Sans, sans-serif" font-size="15.500" font-weight="bold" fill="#4e6e4c">#</text></svg>
<span class="t" style="left:1705px;top:986.0px;font-size:20px;color:#8a8a8a;line-height:30px;letter-spacing:0.71px;">LimitCheck</span>
<svg class="a" style="left:1994.5px;top:992px;" width="16" height="16" viewBox="0 0 16 16"><circle cx="8" cy="8" r="6.800" fill="none" stroke="#9a9a9a" stroke-width="1.600"/><circle cx="8" cy="8" r="2.600" fill="#9a9a9a"/></svg>
<div class="a " style="left:1679px;top:1019px;width:339.5px;height:29px;background:#2a2a2a;border:1.200px solid #1e1e1e;border-radius:4px;"></div>
<div class="a " style="left:1988px;top:1020px;width:29.5px;height:27px;background:#373737;border-radius:0 3px 3px 0;"></div>
<span class="t" style="left:1467px;top:1018.5px;font-size:20px;color:#d2d2d2;line-height:30px;letter-spacing:0.76px;">Input Text</span>
<svg class="a" style="left:1683.5px;top:1023.5px;" width="20" height="20" viewBox="0 0 20 20"><rect x="0.700" y="0.700" width="18.600" height="18.600" fill="#1d2733" stroke="#3f9ae0" stroke-width="1.400"/><text x="5.600" y="17.200" font-family="Liberation Serif, serif" font-size="21" font-weight="bold" fill="#4aa8f0">I</text></svg>
<span class="t" style="left:1705px;top:1019.5px;font-size:20px;color:#e4e4e4;line-height:30px;width:282.5px;overflow:hidden;letter-spacing:0.31px;">InputField (TMP) (TMP_Input Field)</span>
<svg class="a" style="left:1994.5px;top:1025.5px;" width="16" height="16" viewBox="0 0 16 16"><circle cx="8" cy="8" r="6.800" fill="none" stroke="#c4c4c4" stroke-width="1.600"/><circle cx="8" cy="8" r="2.600" fill="#c4c4c4"/></svg>
<div class="a " style="left:1435px;top:1061.5px;width:592px;height:1.5px;background:#1f1f1f;"></div>
<div class="a " style="left:1435px;top:1063px;width:592px;height:11px;background:#3e3e3e;"></div>
<div class="a " style="left:0px;top:1004px;width:950px;height:31px;background:#282828;border-radius:0 3px 0 0;"></div>
<div class="a " style="left:0px;top:1004px;width:127px;height:31px;background:#3c3c3c;border-radius:0 3px 0 0;"></div>
<svg class="a" style="left:5px;top:1011px;" width="21" height="17" viewBox="0 0 21 17"><path d="M0 2a2 2 0 0 1 2-2h5.500l2.500 3H19a2 2 0 0 1 2 2v10a2 2 0 0 1-2 2H2a2 2 0 0 1-2-2z" fill="#c4c4c4"/></svg>
<span class="t" style="left:32px;top:1006.2px;font-size:20px;color:#d2d2d2;line-height:30px;letter-spacing:0.68px;">Project</span>
<svg class="a" style="left:891.5px;top:1010.5px;" width="16" height="17" viewBox="0 0 16 17"><rect x="1.400" y="8.700" width="13.200" height="7.200" rx="1" fill="none" stroke="#c4c4c4" stroke-width="1.900"/><path d="M4 5.300V5a3.900 3.900 0 0 1 7.800 0V8.700" fill="none" stroke="#c4c4c4" stroke-width="1.900"/></svg>
<svg class="a" style="left:925px;top:1008.2px;" width="6" height="22" viewBox="0 0 6 22"><circle cx="3" cy="4.2" r="2.3" fill="#c4c4c4"/><circle cx="3" cy="11.0" r="2.3" fill="#c4c4c4"/><circle cx="3" cy="17.8" r="2.3" fill="#c4c4c4"/></svg>
<div class="a " style="left:0px;top:1035px;width:950px;height:33.5px;background:#3c3c3c;"></div>
<div class="a " style="left:0px;top:1068.5px;width:950px;height:1.5px;background:#232323;"></div>
<div class="a " style="left:0px;top:1070px;width:950px;height:4px;background:#383838;"></div>
<svg class="a" style="left:5px;top:1042px;" width="20" height="20" viewBox="0 0 20 20"><path d="M10 0v20M0 10h20" stroke="#c4c4c4" stroke-width="3"/></svg>
<svg class="a" style="left:32.0px;top:1048.5px;" width="12" height="8" viewBox="0 0 12 8"><path d="M0 0h12L6.0 8z" fill="#c4c4c4"/></svg>
<div class="a " style="left:220.5px;top:1039.5px;width:530px;height:25px;background:#282828;border:1.500px solid #1e1e1e;border-radius:7px;"></div>
<div class="a " style="left:721px;top:1041px;width:1.5px;height:22px;background:#383838;"></div>
<svg class="a" style="left:228px;top:1046px;" width="13" height="13" viewBox="0 0 13 13"><circle cx="5" cy="5" r="3.500" fill="none" stroke="#b0b0b0" stroke-width="1.800"/><path d="M7.500 7.500l4.300 4.300" stroke="#b0b0b0" stroke-width="2"/></svg>
<svg class="a" style="left:726px;top:1042px;" width="20" height="20" viewBox="0 0 20 20"><rect x="6" y="1.200" width="12.800" height="12.800" rx="1.500" fill="none" stroke="#c4c4c4" stroke-width="1.700"/><rect x="1.200" y="12" width="7" height="7" fill="#282828" stroke="#c4c4c4" stroke-width="1.700"/><path d="M9 11l6.500-6.500M10.500 4.300h5.200V9.500" fill="none" stroke="#c4c4c4" stroke-width="1.700"/></svg>
<div class="a " style="left:755px;top:1036px;width:1.5px;height:32px;background:#2c2c2c;"></div>
<div class="a " style="left:798px;top:1036px;width:1.5px;height:32px;background:#2c2c2c;"></div>
<div class="a " style="left:841px;top:1036px;width:1.5px;height:32px;background:#2c2c2c;"></div>
<div class="a " style="left:885px;top:1036px;width:1.5px;height:32px;background:#2c2c2c;"></div>
<svg class="a" style="left:765px;top:1041px;" width="22" height="22" viewBox="0 0 22 22"><circle cx="6.500" cy="15" r="6" fill="#c4c4c4"/><rect x="3" y="1" width="9" height="7" fill="#c4c4c4"/><path d="M15.500 3l6 12h-9z" fill="#c4c4c4"/></svg>
<svg class="a" style="left:809px;top:1043px;" width="20" height="18" viewBox="0 0 20 18"><path d="M1 9.500L9.500 1H18v8.500L9.500 18z" fill="#c4c4c4" transform="rotate(0)"/><circle cx="14" cy="5" r="1.600" fill="#3c3c3c"/></svg>
<svg class="a" style="left:853px;top:1042px;" width="20" height="19" viewBox="0 0 20 19"><path d="M10 0l2.900 6.500 7.100 0.700-5.300 4.700 1.500 7L10 15.300 3.800 18.900l1.500-7L0 7.200l7.100-0.700z" fill="#8a8a8a"/></svg>
<svg class="a" style="left:895px;top:1042px;" width="24" height="20" viewBox="0 0 24 20"><path d="M1.200 10c2.600-4.600 6.200-6.800 10.800-6.800s8.200 2.200 10.800 6.800c-2.600 4.600-6.200 6.800-10.800 6.800S3.800 14.600 1.200 10z" fill="none" stroke="#c4c4c4" stroke-width="1.900"/><circle cx="9.500" cy="8.800" r="2.200" fill="#c4c4c4"/><path d="M3 19L20.500 0.500" stroke="#3c3c3c" stroke-width="4.600"/><path d="M3 19L20.500 0.500" stroke="#c4c4c4" stroke-width="2.100" stroke-linecap="round"/></svg>
<span class="t" style="left:921.5px;top:1037.7px;font-size:20px;color:#d2d2d2;line-height:30px;letter-spacing:-0.13px;">11</span>
<div class="a " style="left:950px;top:1001px;width:3px;height:73px;background:#191919;"></div>
<div class="a " style="left:0px;top:1000.5px;width:1432px;height:3.5px;background:#191919;"></div>
<div class="a " style="left:953px;top:1004px;width:479px;height:31px;background:#282828;border-radius:3px 3px 0 0;"></div>
<div class="a " style="left:953px;top:1004px;width:145px;height:31px;background:#3c3c3c;border-radius:3px 3px 0 0;"></div>
<svg class="a" style="left:968px;top:1010.5px;" width="17" height="17" viewBox="0 0 17 17"><rect x="0" y="0" width="17" height="17" rx="2" fill="#c4c4c4"/><path d="M3 4.500h11M3 8.500h11M3 12.500h7.500" stroke="#3c3c3c" stroke-width="1.700"/></svg>
<span class="t" style="left:993.5px;top:1006.2px;font-size:20px;color:#d2d2d2;line-height:30px;letter-spacing:0.37px;">Console</span>
<svg class="a" style="left:1407.5px;top:1008px;" width="6" height="22" viewBox="0 0 6 22"><circle cx="3" cy="4.2" r="2.3" fill="#c4c4c4"/><circle cx="3" cy="11.0" r="2.3" fill="#c4c4c4"/><circle cx="3" cy="17.8" r="2.3" fill="#c4c4c4"/></svg>
<div class="a " style="left:953px;top:1035px;width:479px;height:33.5px;background:#3c3c3c;"></div>
<div class="a " style="left:953px;top:1068.5px;width:479px;height:1.5px;background:#232323;"></div>
<div class="a " style="left:953px;top:1070px;width:479px;height:4px;background:#383838;"></div>
<span class="t" style="left:960px;top:1038.2px;font-size:20px;color:#d2d2d2;line-height:30px;letter-spacing:0.44px;">Clear</span>
<div class="a " style="left:1018.5px;top:1042px;width:1.2px;height:20px;background:#2c2c2c;"></div>
<svg class="a" style="left:1027.5px;top:1048.5px;" width="12" height="8" viewBox="0 0 12 8"><path d="M0 0h12L6.0 8z" fill="#c4c4c4"/></svg>
<div class="a " style="left:1046.5px;top:1036px;width:1.5px;height:32px;background:#2c2c2c;"></div>
<span class="t" style="left:1056px;top:1038.2px;font-size:20px;color:#d2d2d2;line-height:30px;letter-spacing:0.40px;">Collapse</span>
<div class="a " style="left:1145.5px;top:1036px;width:1.5px;height:32px;background:#2c2c2c;"></div>
<div class="a " style="left:1251.5px;top:1036px;width:65px;height:32px;background:#4f4f4f;"></div>
<div class="a " style="left:1318.5px;top:1036px;width:54.5px;height:32px;background:#484848;"></div>
<div class="a " style="left:1375px;top:1036px;width:55.5px;height:32px;background:#484848;"></div>
<div class="a " style="left:1317px;top:1036px;width:1.5px;height:32px;background:#2c2c2c;"></div>
<div class="a " style="left:1373.5px;top:1036px;width:1.5px;height:32px;background:#2c2c2c;"></div>
<div class="a " style="left:1430.5px;top:1036px;width:1.5px;height:32px;background:#2c2c2c;"></div>
<div class="a " style="left:1250px;top:1036px;width:1.5px;height:32px;background:#2c2c2c;"></div>
<svg class="a" style="left:1260.5px;top:1041px;" width="22" height="23" viewBox="0 0 22 23"><path d="M11 0.500a10.500 10.500 0 1 1-5 19.800L1.500 22l1.600-4.300A10.500 10.500 0 0 1 11 0.500z" fill="#f2f2f2"/><rect x="9.700" y="4.500" width="2.600" height="8.500" fill="#4f4f4f"/><circle cx="11" cy="16" r="1.600" fill="#4f4f4f"/></svg>
<span class="t" style="left:1288px;top:1038.2px;font-size:20px;color:#d2d2d2;line-height:30px;letter-spacing:-0.12px;">25</span>
<svg class="a" style="left:1327px;top:1041.5px;" width="22" height="20" viewBox="0 0 22 20"><path d="M11 0.500L21.500 19.500H0.500z" fill="#7a7a7a"/><rect x="10" y="7" width="2" height="7" fill="#484848"/><circle cx="11" cy="16.500" r="1.300" fill="#484848"/></svg>
<span class="t" style="left:1355px;top:1038.2px;font-size:20px;color:#d2d2d2;line-height:30px;letter-spacing:0.88px;">0</span>
<svg class="a" style="left:1383.5px;top:1041px;" width="22" height="22" viewBox="0 0 22 22"><path d="M6.500 0.500h9l6 6v9l-6 6h-9l-6-6v-9z" fill="#e8e8e8"/><rect x="9.700" y="4.500" width="2.600" height="8.500" fill="#484848"/><circle cx="11" cy="16" r="1.600" fill="#484848"/></svg>
<span class="t" style="left:1412px;top:1038.2px;font-size:20px;color:#d2d2d2;line-height:30px;letter-spacing:0.88px;">0</span>
<svg class="a" style="left:0;top:0" width="2048" height="1074" viewBox="0 0 2048 1074">
<g fill="none" stroke="#6cef49" stroke-width="4.200">
<rect x="105.300" y="314" width="213" height="35.800" rx="17.900"/>
<rect x="1457.300" y="276.800" width="567.500" height="161" rx="16"/>
<rect x="1457.600" y="942.400" width="566.800" height="122.400" rx="17"/>
<path d="M330.200 335.800 C705.600 267.600 1092.400 281.600 1464 370.900"/>
<path d="M256.600 414.900 C747.400 517.300 1210.600 724.100 1620.500 1014.200"/>
</g>
<path d="M1482.500 374.700L1465.300 360.800L1460.300 380.200z" fill="#6cef49" stroke="#6cef49" stroke-width="1" stroke-linejoin="round"/>
<path d="M1635.300 1025.200L1626.100 1005.700L1613 1020.500z" fill="#6cef49" stroke="#6cef49" stroke-width="1" stroke-linejoin="round"/>
</svg>
<span class="t" style="left:1180.5px;top:229.0px;font-size:22px;color:#6cef49;line-height:30px;font-weight:bold;font-family:'Liberation Sans','Noto Sans CJK JP',sans-serif;letter-spacing:0.50px;">値が変更された時に</span>
<span class="t" style="left:1180.5px;top:255.0px;font-size:22px;color:#6cef49;line-height:30px;font-weight:bold;font-family:'Liberation Sans','Noto Sans CJK JP',sans-serif;letter-spacing:0.20px;">呼び出されるイベント</span>
</div></body></html>
